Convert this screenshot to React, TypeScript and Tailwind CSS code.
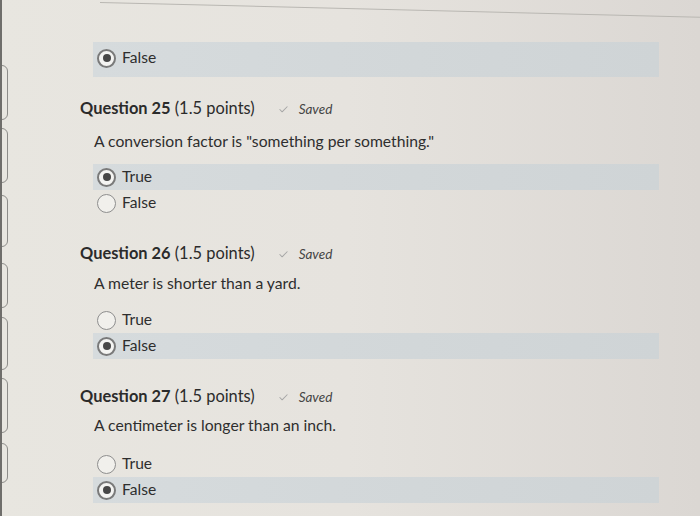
import { Check } from 'lucide-react';

type Choice = { label: string; selected: boolean };

interface QuestionProps {
  number: number;
  prompt: string;
  choices: Choice[];
  gaps: { heading: string; prompt: string; choices: string };
}

function Radio({ selected }: { selected: boolean }) {
  return selected ? (
    <span className="flex h-[19px] w-[19px] items-center justify-center rounded-full border-2 border-[#7a7a7a] bg-[#f4f4f2]">
      <span className="h-[8px] w-[8px] rounded-full bg-[#474747]" />
    </span>
  ) : (
    <span className="h-[19px] w-[19px] rounded-full border border-[#8e8e8e] bg-[#f1f0ec]" />
  );
}

function ChoiceRow({ choice, tall }: { choice: Choice; tall?: boolean }) {
  return (
    <div
      className={`ml-[13px] flex w-[566px] items-center gap-[6px] pl-[4px] ${tall ? 'h-[35px] pb-[3px]' : 'h-[26px]'} ${
        choice.selected ? 'bg-gradient-to-r from-[#d6dbdd] to-[#cfd4d6]' : ''
      }`}
    >
      <Radio selected={choice.selected} />
      <span className="text-[15.6px] text-[#2e2e2e]">{choice.label}</span>
    </div>
  );
}

function Question({ number, prompt, choices, gaps }: QuestionProps) {
  return (
    <div>
      <div className={`flex h-[24px] items-center ${gaps.heading}`}>
        <span className="text-[16.4px] text-[#2b2b2b]">
          <span className="font-bold">Question {number}</span> (1.5 points)
        </span>
        <span className="ml-[23px] mt-[3px] flex items-center gap-[10px] text-[13.5px] italic text-[#444]">
          <Check size={11} strokeWidth={2.2} className="text-[#a6a6a6]" />
          Saved
        </span>
      </div>
      <div className={`ml-[14px] flex h-[24px] items-center text-[15.7px] text-[#2e2e2e] ${gaps.prompt}`}>
        {prompt}
      </div>
      <div className={gaps.choices}>
        {choices.map((c) => (
          <ChoiceRow key={c.label} choice={c} />
        ))}
      </div>
    </div>
  );
}

// edges of the neighbouring window peeking in on the left
const tabs = [
  { top: 'mt-[65px]', h: 'h-[55px]' },
  { top: 'mt-[8px]', h: 'h-[55px]' },
  { top: 'mt-[12px]', h: 'h-[52px]' },
  { top: 'mt-[16px]', h: 'h-[45px]' },
  { top: 'mt-[9px]', h: 'h-[53px]' },
  { top: 'mt-[8px]', h: 'h-[55px]' },
  { top: 'mt-[10px]', h: 'h-[40px]' },
];

export default function App() {
  return (
    <div
      className="flex h-[516px] w-[700px] overflow-hidden bg-gradient-to-r from-[#e8e6e0] via-[#e6e3de] to-[#dbd7d3]"
      style={{ fontFamily: 'Lato, "Open Sans", sans-serif' }}
    >
      <div className="h-full w-[2px] shrink-0 bg-[#6f6e6b]" />
      <div className="flex w-[6px] shrink-0 flex-col overflow-hidden">
        {tabs.map((t, i) => (
          <div
            key={i}
            className={`-ml-[8px] w-[14px] shrink-0 rounded-md border border-[#8d8c89] ${t.top} ${t.h}`}
          />
        ))}
      </div>

      <div className="flex-1 pl-[72px]">
        <div className="h-[42px] pt-[2px]">
          <div className="ml-[20px] h-px w-[640px] origin-left rotate-[1.4deg] bg-[#b9b7b2]" />
        </div>

        <ChoiceRow tall choice={{ label: 'False', selected: true }} />

        <Question
          number={25}
          prompt={'A conversion factor is "something per something."'}
          choices={[
            { label: 'True', selected: true },
            { label: 'False', selected: false },
          ]}
          gaps={{ heading: 'mt-[19px]', prompt: 'mt-[10px]', choices: 'mt-[10px]' }}
        />
        <Question
          number={26}
          prompt="A meter is shorter than a yard."
          choices={[
            { label: 'True', selected: false },
            { label: 'False', selected: true },
          ]}
          gaps={{ heading: 'mt-[25px]', prompt: 'mt-[7px]', choices: 'mt-[11px]' }}
        />
        <Question
          number={27}
          prompt="A centimeter is longer than an inch."
          choices={[
            { label: 'True', selected: false },
            { label: 'False', selected: true },
          ]}
          gaps={{ heading: 'mt-[25px]', prompt: 'mt-[6px]', choices: 'mt-[13px]' }}
        />
      </div>
    </div>
  );
}
